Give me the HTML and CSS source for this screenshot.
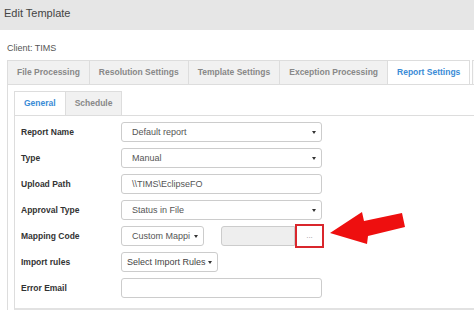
FILE: index.html
```html
<!DOCTYPE html>
<html lang="en">
<head>
    <meta charset="UTF-8">
    <meta name="viewport" content="width=device-width, initial-scale=1.0">
    <title>Edit Template</title>
    <link rel="stylesheet" href="styles.css">
</head>
<body>
    <div class="page-header">Edit Template</div>

    <div class="client-line">Client: TIMS</div>

    <ul class="nav-tabs">
        <li>File Processing</li>
        <li>Resolution Settings</li>
        <li>Template Settings</li>
        <li>Exception Processing</li>
        <li class="active">Report Settings</li>
        <li class="more"></li>
    </ul>

    <div class="tab-pane">
        <div class="report-panel">
            <ul class="nav-tabs sub-tabs">
                <li class="active">General</li>
                <li>Schedule</li>
            </ul>

            <div class="report-form">
                <div class="form-row">
                    <label>Report Name</label>
                    <div class="field select">Default report<span class="caret"></span></div>
                </div>
                <div class="form-row">
                    <label>Type</label>
                    <div class="field select">Manual<span class="caret"></span></div>
                </div>
                <div class="form-row">
                    <label>Upload Path</label>
                    <div class="field">\\TIMS\EclipseFO</div>
                </div>
                <div class="form-row">
                    <label>Approval Type</label>
                    <div class="field select">Status in File<span class="caret"></span></div>
                </div>
                <div class="form-row">
                    <label>Mapping Code</label>
                    <div class="field select field-short">Custom Mappi<span class="caret"></span></div>
                    <div class="field field-disabled"></div>
                    <button class="browse-btn">...</button>
                </div>
                <div class="form-row">
                    <label>Import rules</label>
                    <button class="dropdown-btn">Select Import Rules <span class="caret"></span></button>
                </div>
                <div class="form-row">
                    <label>Error Email</label>
                    <div class="field"></div>
                </div>
            </div>
        </div>
    </div>

    <!-- callout pointing at the browse button -->
    <svg class="callout-arrow" width="80" height="36" viewBox="0 0 80 36">
        <polygon points="2,23 34,2 36,11 74,3 77,17 40,26 39,34" fill="#ee0f0f"/>
    </svg>
</body>
</html>
```

FILE: styles.css
```css
* {
    margin: 0;
    padding: 0;
    box-sizing: border-box;
}

body {
    font-family: "Liberation Sans", Arial, sans-serif;
    background: #fff;
    color: #333;
    overflow: hidden;
    width: 474px;
    height: 317px;
}

.page-header {
    height: 30px;
    padding: 6px 0 0 4px;
    line-height: 14px;
    font-size: 11px;
    color: #444;
    background: #e6e6e6;
}

.client-line {
    padding: 12px 0 6px 7px;
    line-height: 12px;
    font-size: 9px;
    color: #555;
}

.nav-tabs {
    list-style: none;
    display: flex;
    margin-left: 7px;
    border-bottom: 1px solid #ddd;
    height: 25px;
    white-space: nowrap;
    overflow: hidden;
}

.nav-tabs li {
    flex-shrink: 0;
    height: 25px;
    margin-bottom: -1px;
    margin-left: -1px;
    padding: 0 9px;
    line-height: 23px;
    font-size: 8.5px;
    font-weight: bold;
    color: #888;
    background: #f1f1f1;
    border: 1px solid #ddd;
}

.nav-tabs li:first-child {
    margin-left: 0;
}

.nav-tabs li.active {
    color: #3a8bd6;
    background: #fff;
    border-bottom-color: #fff;
}

.nav-tabs li.more {
    margin-left: 2px;
    width: 30px;
    background: #fafafa;
}

.tab-pane {
    margin-left: 7px;
    border-left: 1px solid #ddd;
    padding: 6px 0 0 6px;
}

.report-panel {
    border-left: 1px solid #ddd;
    border-bottom: 2px solid #e2e2e2;
}

.sub-tabs {
    margin-left: -1px;
}

.report-form {
    padding: 6px 0 10px 6px;
}

.form-row {
    display: flex;
    align-items: center;
    height: 20px;
    margin-bottom: 6px;
}

.form-row:last-child {
    margin-bottom: 0;
}

.form-row label {
    width: 100px;
    font-size: 8.5px;
    font-weight: bold;
    color: #333;
}

.field {
    position: relative;
    width: 201px;
    height: 20px;
    padding: 0 10px;
    line-height: 18px;
    font-size: 9px;
    color: #555;
    background: #fff;
    border: 1px solid #ccc;
    border-radius: 3px;
}

.caret {
    display: inline-block;
    width: 0;
    height: 0;
    border-left: 2.5px solid transparent;
    border-right: 2.5px solid transparent;
    border-top: 3px solid #333;
    vertical-align: middle;
}

.select .caret {
    position: absolute;
    right: 5px;
    top: 8px;
}

.field-short {
    width: 83px;
    margin-right: 17px;
}

.field-disabled {
    width: 74px;
    background: #eee;
    border-radius: 3px 0 0 3px;
}

.browse-btn {
    width: 29px;
    height: 24px;
    padding: 0;
    line-height: 20px;
    font-family: inherit;
    font-size: 8px;
    color: #999;
    background: #fff;
    border: 2px solid #d9262c;
}

.dropdown-btn {
    width: 97px;
    height: 20px;
    font-family: inherit;
    font-size: 9px;
    color: #444;
    background: #fff;
    border: 1px solid #ccc;
    border-radius: 3px;
}

.callout-arrow {
    position: absolute;
    left: 328px;
    top: 210px;
}
```
